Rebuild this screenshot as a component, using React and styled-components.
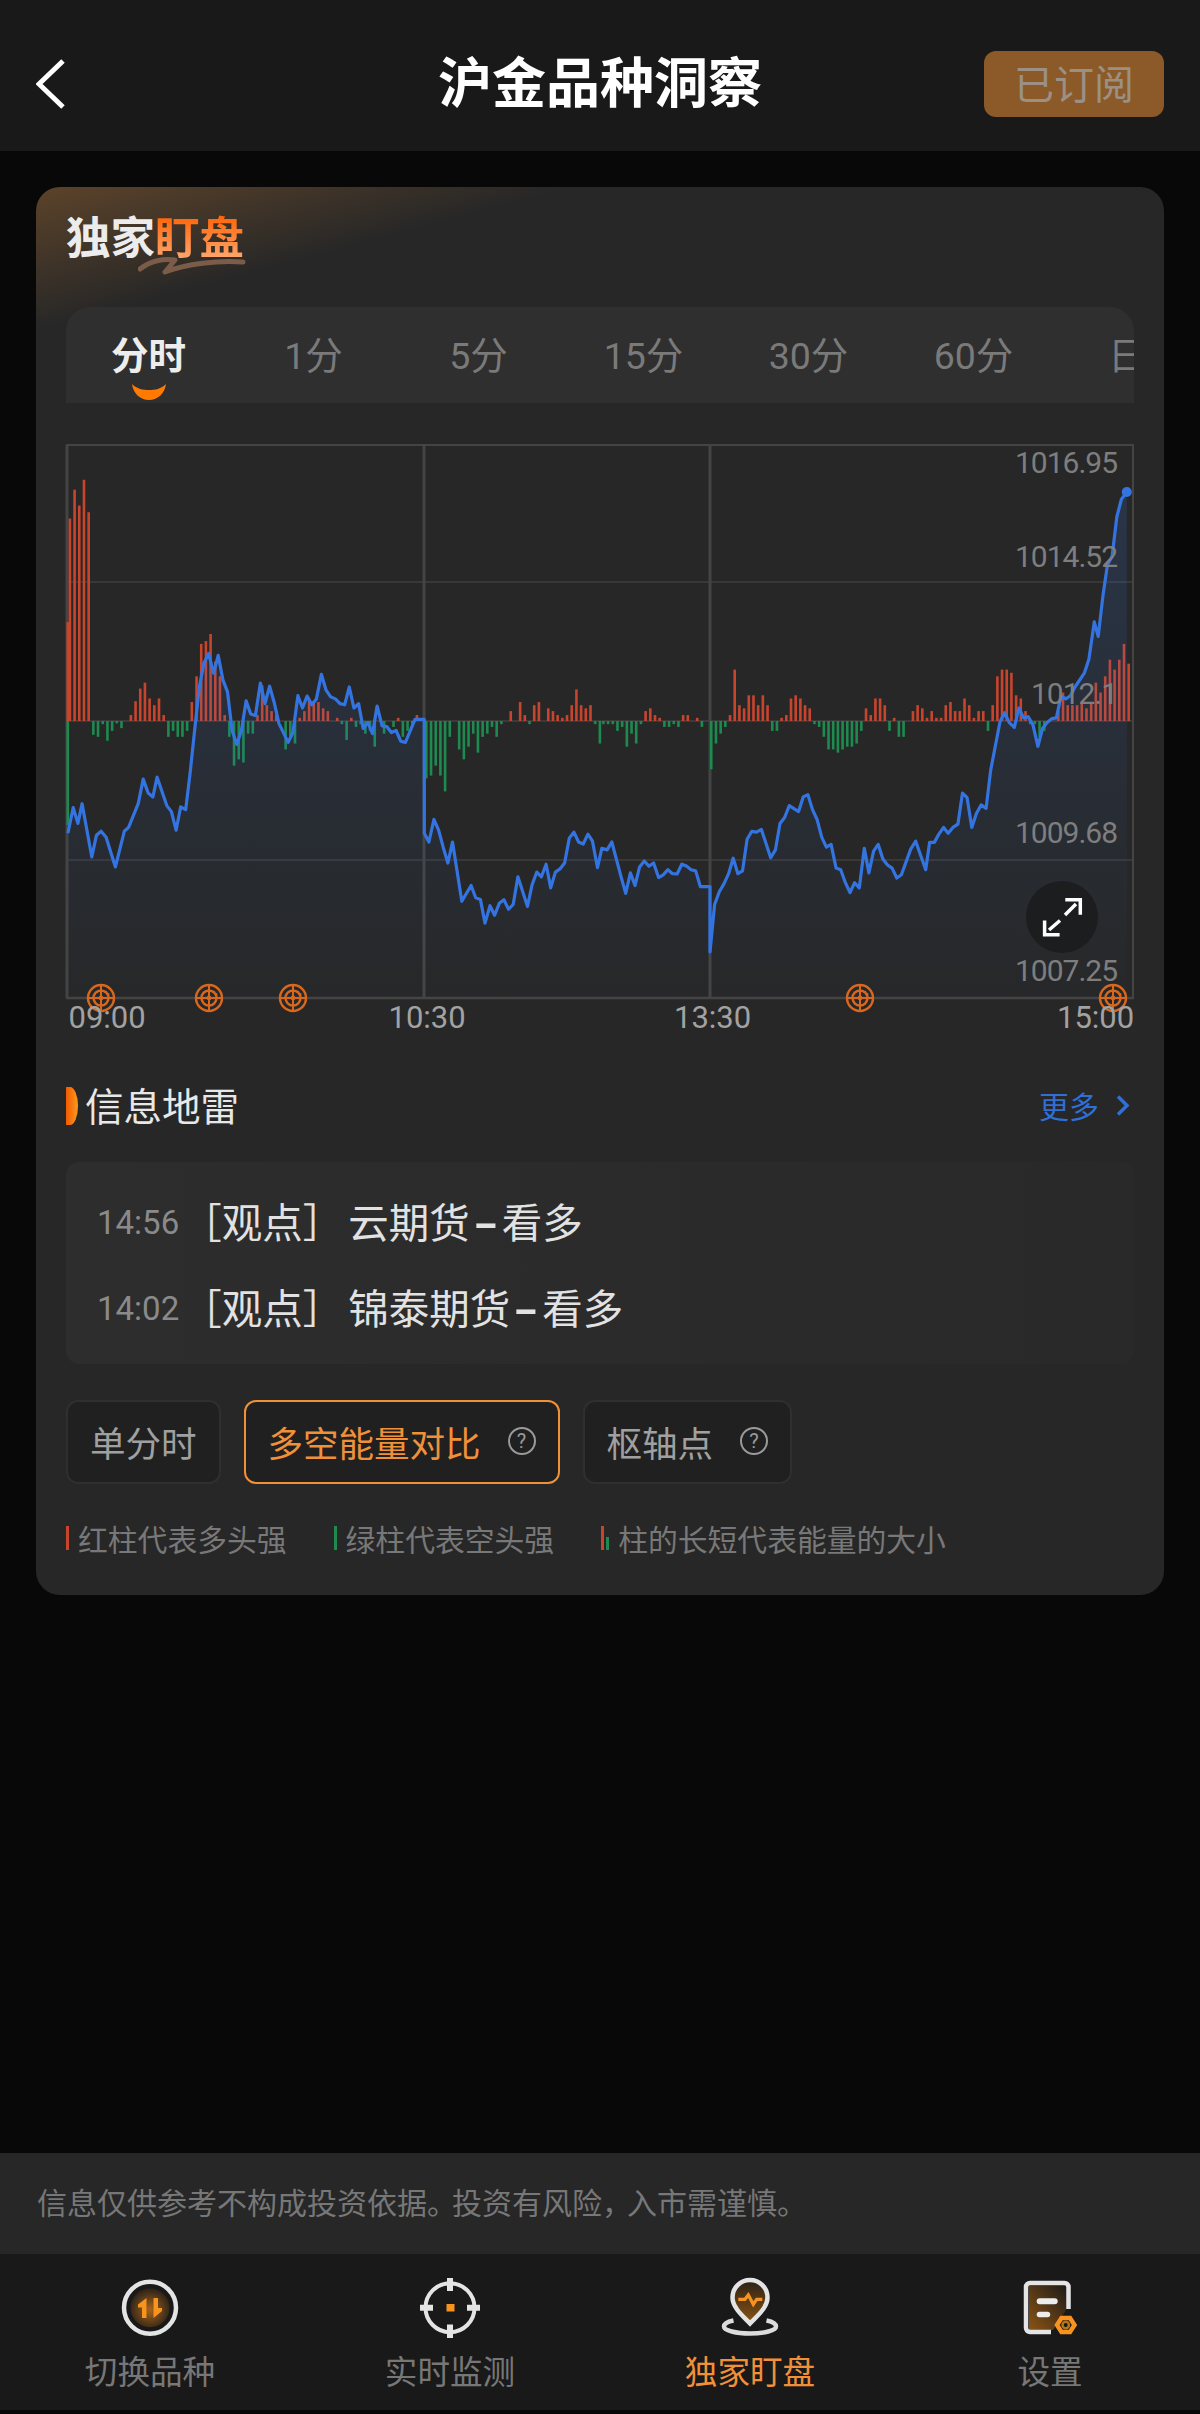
import React from "react";
import styled, { createGlobalStyle } from "styled-components";

const FONT = `Roboto, "Noto Sans CJK SC", sans-serif`;

const GlobalStyle = createGlobalStyle`
  html, body {
    margin: 0;
    padding: 0;
    background: #080808;
  }
  * {
    box-sizing: border-box;
  }
`;

const Page = styled.div`
  width: 1200px;
  height: 2414px;
  display: flex;
  flex-direction: column;
  background: #080808;
  font-family: ${FONT};
`;

const Header = styled.header`
  height: 151px;
  padding: 16px 36px 0;
  display: grid;
  grid-template-columns: 1fr auto 1fr;
  align-items: center;
  background: #191919;
`;

const BackIcon = styled.svg`
  width: 30px;
  height: 50px;
  display: block;
`;

const Title = styled.h1`
  margin: 0;
  padding-top: 3px;
  font-size: 54px;
  font-weight: 700;
  line-height: 60px;
  color: #fff;
`;

const SubscribedButton = styled.div`
  justify-self: end;
  width: 180px;
  height: 66px;
  padding-bottom: 3px;
  display: flex;
  align-items: center;
  justify-content: center;
  border-radius: 12px;
  background: #8b5a28;
  color: #9c9084;
  font-size: 40px;
`;

const Main = styled.main`
  flex: 1;
  padding: 36px 36px 0;
`;

const Card = styled.section`
  height: 1408px;
  border-radius: 24px;
  padding: 0 30px;
  background: linear-gradient(165deg, #5c432a 0, #272727 140px);
`;

const CardTitleRow = styled.div`
  height: 120px;
  padding-top: 26px;
`;

const CardTitle = styled.div`
  position: relative;
  display: inline-block;
  font-size: 44.5px;
  font-weight: 700;
  line-height: 52px;
  color: #ececec;
`;

const TitleAccent = styled.span`
  background: linear-gradient(180deg, #ff5f00, #ffb07a);
  -webkit-background-clip: text;
  background-clip: text;
  color: transparent;
`;

const Squiggle = styled.svg`
  position: absolute;
  left: 72px;
  top: 41px;
  width: 110px;
  height: 22px;
`;

const Tabs = styled.div`
  height: 96px;
  display: flex;
  overflow: hidden;
  border-radius: 24px 24px 0 0;
  background: #2f2f2f;
`;

const Tab = styled.div`
  position: relative;
  flex: none;
  width: 165px;
  padding-bottom: 5px;
  display: flex;
  align-items: center;
  justify-content: center;
  font-size: 37.5px;
  font-weight: ${(p) => (p.$active ? 700 : 400)};
  color: ${(p) => (p.$active ? "#ededed" : "#7a7a7a")};
`;

const TabSmile = styled.svg`
  position: absolute;
  left: 65px;
  bottom: 3px;
  width: 36px;
  height: 16px;
`;

const ChartBox = styled.div`
  position: relative;
  height: 595px;
  margin-top: 42px;
`;

const ChartSvg = styled.svg`
  display: block;
  width: 1068px;
  height: 595px;
  overflow: visible;
`;

const PriceLabel = styled.span`
  position: absolute;
  left: ${(p) => p.$x}px;
  top: ${(p) => p.$y}px;
  transform: translateY(-50%);
  font-size: 30px;
  letter-spacing: -1px;
  line-height: 1;
  color: #7e7e7e;
`;

const TimeLabel = styled.span`
  position: absolute;
  left: ${(p) => p.$x}px;
  top: 572px;
  transform: translateY(-50%);
  font-size: 31px;
  line-height: 1;
  color: #a2a2a2;
`;

const ExpandButton = styled.div`
  position: absolute;
  left: 960px;
  top: 436px;
  width: 72px;
  height: 72px;
  border-radius: 50%;
  background: #1c1d1f;
`;

const SectionHeader = styled.div`
  height: 40px;
  margin-top: 44px;
  margin-bottom: 38px;
  display: flex;
  align-items: center;
  justify-content: space-between;
`;

const SectionTitle = styled.div`
  display: flex;
  align-items: center;
  gap: 7px;
  font-size: 38.5px;
  color: #e8e8e8;
`;

const SectionMarker = styled.span`
  width: 12px;
  height: 38px;
  margin-top: 3px;
  border-radius: 0 8px 8px 0 / 0 19px 19px 0;
  background: linear-gradient(90deg, #f05a00, #ff9a1f);
`;

const MoreLink = styled.div`
  display: flex;
  align-items: center;
  gap: 17px;
  padding-right: 4px;
  padding-top: 2px;
  font-size: 30px;
  color: #2f6fd6;
`;

const InfoPanel = styled.div`
  height: 202px;
  padding: 33px 31px;
  display: flex;
  flex-direction: column;
  gap: 36px;
  border-radius: 14px;
  background: linear-gradient(90deg, #2d2d2d, #292929);
`;

const InfoRow = styled.div`
  height: 50px;
  display: flex;
  align-items: center;
  gap: 2px;
`;

const InfoTime = styled.span`
  padding-top: 5px;
  font-size: 33px;
  color: #8a8a8a;
`;

const InfoText = styled.span`
  font-size: 40.5px;
  color: #e2e2e2;
`;

const InfoTag = styled.span`
  margin-right: 5px;
`;

const InfoDash = styled.span`
  display: inline-block;
  width: 32px;
  text-align: center;
  font-weight: 700;
  transform: scaleX(1.7);
`;

const ModeRow = styled.div`
  margin-top: 36px;
  display: flex;
  gap: 23px;
`;

const ModeButton = styled.div`
  height: 84px;
  padding: 0 22px 2px;
  display: flex;
  align-items: center;
  gap: 27px;
  border-radius: 12px;
  border: 2px solid ${(p) => (p.$active ? "#f0913a" : "#2f2f2f")};
  background: #202020;
  font-size: 35.5px;
  color: ${(p) => (p.$active ? "#f0913a" : "#a0a0a0")};
`;

const HelpMark = styled.span`
  width: 28px;
  height: 28px;
  display: flex;
  align-items: center;
  justify-content: center;
  border-radius: 50%;
  border: 2px solid #9a9a9a;
  font-size: 20px;
  line-height: 1;
  color: #9a9a9a;
`;

const Legend = styled.div`
  height: 40px;
  margin-top: 34px;
  display: flex;
  align-items: center;
  gap: 47px;
`;

const LegendItem = styled.div`
  display: flex;
  align-items: center;
  gap: 9px;
  font-size: 29.8px;
  color: #787878;
`;

const LegendMarks = styled.span`
  height: 24px;
  display: flex;
  align-items: flex-end;
  gap: 2px;
`;

const LegendMark = styled.span`
  width: 3px;
  height: ${(p) => (p.$short ? 13 : 24)}px;
  background: ${(p) => p.$color};
`;

const Disclaimer = styled.div`
  height: 101px;
  padding: 0 37px 5px;
  display: flex;
  align-items: center;
  background: #272727;
  font-size: 30px;
  color: #777;
`;

const Punct = styled.span`
  letter-spacing: -5px;
`;

const TabBar = styled.nav`
  height: 156px;
  margin-bottom: 4px;
  padding-top: 11px;
  display: grid;
  grid-template-columns: repeat(4, 1fr);
  background: #191919;
`;

const NavItem = styled.div`
  display: flex;
  flex-direction: column;
  align-items: center;
  gap: 3px;
  font-size: 32.6px;
  line-height: 40px;
  color: ${(p) => (p.$active ? "#f0913a" : "#777")};
`;

const NavIcon = styled.svg`
  width: 100px;
  height: 85px;
  display: block;
`;

/* chart data is read off the reference: zx/zy are crop coordinates, converted below */
const LEFT_LINE = [
  [50,1020],[65,955],[78,995],[90,945],[117,1080],[130,1025],[143,1015],[157,1030],[183,1105],[208,1015],[220,1005],[247,945],[261,883],[275,918],[288,928],[300,878],[327,950],[340,965],[353,1012],[366,953],[380,960],[392,870],[405,760],[418,650],[431,590],[444,565],[458,615],[471,570],[484,632],[497,662],[510,760],[523,795],[536,760],[549,685],[562,718],[575,722],[589,640],[602,692],[615,648],[628,690],[641,742],[667,790],[680,765],[694,672],[707,703],[720,673],[733,695],[746,680],[760,618],[773,658],[786,675],[799,680],[812,692],[825,695],[838,650],[851,703],[864,692],[877,755],[890,740],[903,768],[916,698],[930,748],[943,750],[956,765],[969,760],[982,787],[995,790],[1022,732],[1048,732],[1048,1020],[1061,1042],[1075,985],[1088,1012],[1101,1055],[1114,1095],[1127,1042],[1153,1192],[1179,1152],[1192,1183],[1205,1187],[1218,1247],[1232,1203],[1245,1227],[1258,1197],[1271,1188],[1284,1212],[1297,1200],[1310,1130],[1337,1205],[1350,1150],[1363,1118],[1376,1130],[1389,1098],[1402,1158],[1415,1118],[1428,1110],[1441,1095],[1454,1032],[1467,1017],[1480,1042],[1493,1047],[1506,1022],[1519,1040],[1533,1107],
];

const RIGHT_LINE = [
  [5,1058],[20,1062],[33,1042],[59,1130],[72,1172],[85,1120],[98,1152],[111,1105],[124,1090],[137,1103],[150,1095],[164,1132],[177,1125],[190,1112],[203,1122],[216,1123],[229,1098],[242,1103],[255,1112],[268,1115],[281,1155],[308,1155],[308,1320],[321,1200],[334,1168],[347,1148],[360,1122],[373,1083],[386,1122],[399,1115],[412,1035],[425,1015],[438,1017],[452,1010],[478,1082],[491,1062],[504,995],[517,980],[530,950],[556,965],[569,928],[582,922],[595,960],[608,985],[621,1030],[634,1055],[647,1048],[661,1108],[674,1112],[687,1145],[700,1170],[713,1145],[726,1158],[740,1058],[753,1120],[766,1065],[779,1048],[792,1085],[805,1100],[818,1108],[831,1133],[844,1125],[870,1060],[884,1040],[912,1112],[923,1043],[936,1043],[949,1022],[962,1005],[975,1020],[988,1005],[1002,997],[1015,918],[1028,930],[1041,1005],[1054,970],[1067,948],[1081,957],[1094,860],[1120,738],[1133,715],[1146,740],[1160,752],[1173,703],[1186,728],[1199,725],[1212,745],[1226,800],[1239,755],[1252,740],[1265,730],[1278,728],[1291,672],[1304,680],[1317,672],[1330,650],[1356,615],[1369,580],[1384,485],[1395,522],[1408,420],[1421,340],[1434,320],[1447,220],[1460,175],[1475,157],
];

const LEFT_BARS = [
  512,585,545,610,528,-35,-40,-8,-50,-25,-6,-18,0,15,50,82,97,57,40,57,15,-40,-25,-40,-40,-25,48,113,195,202,220,150,113,15,-40,-113,-97,-105,-32,-32,15,90,40,25,15,0,-72,-40,-57,8,25,57,50,48,32,25,0,8,-8,-48,8,-15,-8,-32,-25,-65,0,-32,0,-15,8,-40,-25,-15,15,0,-145,-138,-113,-138,-178,-40,0,-72,-97,-65,-32,-80,-40,-32,-15,-40,-8,0,25,0,48,15,-8,40,48,0,32,25,15,8,15,40,80,40,32,40,-8,-57,
];

const RIGHT_BARS = [
  -8,-8,-8,-25,-15,-65,-32,-57,-8,25,32,15,8,-15,-15,-8,-15,15,15,0,8,-15,0,-122,-57,-32,-15,15,130,40,32,65,65,40,65,40,-25,-25,8,15,57,65,57,40,32,-8,-15,-40,-72,-72,-80,-72,-65,-65,-57,-25,32,15,57,57,40,-25,8,-40,-40,0,25,40,32,8,25,8,8,40,48,25,25,57,40,8,25,25,-25,40,113,130,130,122,65,57,25,-8,-8,-40,-25,0,0,25,72,40,40,40,48,32,48,97,72,113,155,130,155,195,145,
];

const SCALE_X = 2.8;
const SCALE_Y = 2.529;
const ZERO_Y = 276;
const BOTTOM_Y = 553;

const toChart = (originX) => ([zx, zy]) => [
  originX + zx / SCALE_X - 66,
  430 + zy / SCALE_Y - 445,
];

const linePoints = [...LEFT_LINE.map(toChart(50)), ...RIGHT_LINE.map(toChart(600))];
const linePath = linePoints.map(([x, y]) => `${x.toFixed(1)},${y.toFixed(1)}`).join(" ");
const lastPoint = linePoints[linePoints.length - 1];
const areaPath = `${linePath} ${lastPoint[0].toFixed(1)},${BOTTOM_Y} ${linePoints[0][0].toFixed(1)},${BOTTOM_Y}`;

const bars = [
  { x: 0.5, v: 250 },
  { x: 0.5, v: -263 },
  ...LEFT_BARS.map((v, i) => ({ x: 2.6 + i * 4.69, v })),
  ...RIGHT_BARS.map((v, i) => ({ x: 536.1 + i * 4.69, v })),
];

const RADARS = [35, 143, 227, 794, 1047];

const Radar = ({ x }) => (
  <g transform={`translate(${x} ${BOTTOM_Y})`} fill="none" stroke="#d9681f" strokeWidth="2.4">
    <circle r="13" />
    <circle r="7.5" />
    <path d="M-13 0H13M0-13V13" strokeWidth="2" />
    <circle r="2.4" fill="#d9681f" stroke="none" />
    <circle cx="5" cy="-6" r="1.2" fill="#d9681f" stroke="none" />
    <circle cx="7.5" cy="-4" r="1" fill="#d9681f" stroke="none" />
  </g>
);

const PriceChart = () => (
  <ChartSvg viewBox="0 0 1068 595">
    <defs>
      <linearGradient id="areaFill" gradientUnits="userSpaceOnUse" x1="0" y1="40" x2="0" y2={BOTTOM_Y}>
        <stop offset="0" stopColor="#3474e0" stopOpacity="0.18" />
        <stop offset="1" stopColor="#3474e0" stopOpacity="0.01" />
      </linearGradient>
    </defs>
    <path d="M0 137H1067M0 415H1067" stroke="#383838" strokeWidth="2" />
    <path d="M0 276H1067" stroke="#424242" strokeWidth="1.5" />
    <path d="M358 0V553M644 0V553" stroke="#444" strokeWidth="3" />
    <path d="M1 553V0H1067V553" fill="none" stroke="#444" strokeWidth="2" />
    <path d="M1 0V553" stroke="#444" strokeWidth="3" />
    <path d="M0 553H1068" stroke="#444" strokeWidth="2.5" />
    {bars.map((bar, i) =>
      bar.v === 0 ? null : (
        <rect
          key={i}
          x={bar.x}
          y={bar.v > 0 ? ZERO_Y - bar.v / SCALE_Y : ZERO_Y}
          width="2.6"
          height={Math.abs(bar.v) / SCALE_Y}
          fill={bar.v > 0 ? "#c8452d" : "#1d8a4f"}
        />
      )
    )}
    <polygon points={areaPath} fill="url(#areaFill)" />
    <polyline points={linePath} fill="none" stroke="#3474e0" strokeWidth="3.2" strokeLinejoin="round" />
    <circle cx={lastPoint[0]} cy={lastPoint[1]} r="5" fill="#3474e0" />
    {RADARS.map((x) => (
      <Radar key={x} x={x} />
    ))}
  </ChartSvg>
);

const SwitchIcon = () => (
  <NavIcon viewBox="0 0 100 85">
    <defs>
      <radialGradient id="switchFill" cx="0.5" cy="0.55" r="0.55">
        <stop offset="0" stopColor="#a8641a" />
        <stop offset="1" stopColor="#2a2118" />
      </radialGradient>
    </defs>
    <circle cx="50" cy="42.7" r="19.5" fill="url(#switchFill)" />
    <circle cx="50" cy="42.7" r="26" fill="none" stroke="#e4e4e4" strokeWidth="4.5" />
    <path d="M46.5 33V53H42V42.5H38V39.5Z M53.5 33H58V43H62V46L53.5 53Z" fill="#f7931e" />
  </NavIcon>
);

const MonitorIcon = () => (
  <NavIcon viewBox="0 0 100 85">
    <circle cx="50" cy="42.7" r="24.5" fill="none" stroke="#e4e4e4" strokeWidth="4" />
    <path d="M47 13H53V26H47Z M47 59.5H53V73H47Z M20 39.7H33V45.7H20Z M67 39.7H80V45.7H67Z" fill="#e4e4e4" />
    <rect x="46.5" y="39" width="8" height="7.5" fill="#f7931e" />
  </NavIcon>
);

const WatchIcon = () => (
  <NavIcon viewBox="0 0 100 85">
    <defs>
      <linearGradient id="watchFill" x1="0" y1="0" x2="0" y2="1">
        <stop offset="0" stopColor="#2a2118" />
        <stop offset="1" stopColor="#8a5414" />
      </linearGradient>
    </defs>
    <path
      d="M50 58.5C44 52 32.5 43 32.5 32.5A17.5 17.5 0 0 1 67.5 32.5C67.5 43 56 52 50 58.5Z"
      fill="url(#watchFill)"
      stroke="#e4e4e4"
      strokeWidth="4.5"
    />
    <polyline
      points="38.3,34.3 45,34.3 48.3,30 53.3,39.3 56.7,34.3 62.3,34.3"
      fill="none"
      stroke="#f7931e"
      strokeWidth="3.2"
    />
    <path
      d="M33.5 55.5C26 57 24 59 24 61.5C24 65.5 36 68.5 50 68.5C64 68.5 76 65.5 76 61.5C76 59 74 57 66.5 55.5"
      fill="none"
      stroke="#dcdcdc"
      strokeWidth="4.5"
    />
  </NavIcon>
);

const SettingsIcon = () => (
  <NavIcon viewBox="0 0 100 85">
    <defs>
      <linearGradient id="settingsFill" x1="1" y1="0" x2="0" y2="1">
        <stop offset="0" stopColor="#1f1c18" />
        <stop offset="1" stopColor="#8a5414" />
      </linearGradient>
    </defs>
    <polygon points="29,21 66,21 66,45 53,65 29,65" fill="url(#settingsFill)" />
    <path
      d="M68.5 44V22a4 4 0 0 0 -4 -4H30a4 4 0 0 0 -4 4V63a4 4 0 0 0 4 4H51"
      fill="none"
      stroke="#e4e4e4"
      strokeWidth="4.5"
    />
    <rect x="36.7" y="33.3" width="21" height="6" rx="3" fill="#ececec" />
    <rect x="36.7" y="46.7" width="13.5" height="5.6" rx="2.8" fill="#ececec" />
    <polygon points="57,60 61.5,53 70,53 74.5,60 70,67 61.5,67" fill="#191919" stroke="#f7931e" strokeWidth="4.5" />
    <circle cx="65.7" cy="60" r="3.2" fill="#191919" stroke="#b87418" strokeWidth="2.5" />
  </NavIcon>
);

const TAB_LABELS = ["分时", "1分", "5分", "15分", "30分", "60分", "日K"];

const PRICES = [
  { text: "1016.95", x: 949, y: 18 },
  { text: "1014.52", x: 949, y: 111.5 },
  { text: "1012.1", x: 965, y: 249 },
  { text: "1009.68", x: 949, y: 387.5 },
  { text: "1007.25", x: 949, y: 526 },
];

const TIMES = [
  { text: "09:00", x: 2.5 },
  { text: "10:30", x: 322.5 },
  { text: "13:30", x: 608 },
  { text: "15:00", x: 991 },
];

const NEWS = [
  { time: "14:56", source: "云期货", view: "看多" },
  { time: "14:02", source: "锦泰期货", view: "看多" },
];

const NAV_ITEMS = [
  { label: "切换品种", Icon: SwitchIcon },
  { label: "实时监测", Icon: MonitorIcon },
  { label: "独家盯盘", Icon: WatchIcon, active: true },
  { label: "设置", Icon: SettingsIcon },
];

const App = () => (
  <Page>
    <GlobalStyle />
    <Header>
      <BackIcon viewBox="0 0 30 50">
        <polyline points="27,2 3,25 27,48" fill="none" stroke="#fff" strokeWidth="5" />
      </BackIcon>
      <Title>沪金品种洞察</Title>
      <SubscribedButton>已订阅</SubscribedButton>
    </Header>
    <Main>
      <Card>
        <CardTitleRow>
          <CardTitle>
            独家<TitleAccent>盯盘</TitleAccent>
            <Squiggle viewBox="0 0 110 22">
              <path
                d="M2 15C12 7 26 4 37 6L27 18C48 10 80 6 105 8"
                fill="none"
                stroke="#7b5c49"
                strokeWidth="5"
                strokeLinecap="round"
                strokeLinejoin="round"
              />
            </Squiggle>
          </CardTitle>
        </CardTitleRow>
        <Tabs>
          {TAB_LABELS.map((label, i) => (
            <Tab key={label} $active={i === 0}>
              {label}
              {i === 0 && (
                <TabSmile viewBox="0 0 36 16">
                  <path d="M1 0C6 5 12 6 18 6C24 6 30 5 35 0C34 9 27 16 18 16C9 16 2 9 1 0Z" fill="#ff7a00" />
                </TabSmile>
              )}
            </Tab>
          ))}
        </Tabs>
        <ChartBox>
          <PriceChart />
          {PRICES.map((price) => (
            <PriceLabel key={price.text} $x={price.x} $y={price.y}>
              {price.text}
            </PriceLabel>
          ))}
          {TIMES.map((time) => (
            <TimeLabel key={time.text} $x={time.x}>
              {time.text}
            </TimeLabel>
          ))}
          <ExpandButton>
            <svg viewBox="0 0 72 72" width="72" height="72">
              <path
                d="M39.3 18.7H54.3V33.7M50 23L39 34M18.6 39.4V53.7H33.6M23 49L34 39.5"
                fill="none"
                stroke="#fff"
                strokeWidth="3.5"
              />
            </svg>
          </ExpandButton>
        </ChartBox>
        <SectionHeader>
          <SectionTitle>
            <SectionMarker />
            信息地雷
          </SectionTitle>
          <MoreLink>
            更多
            <svg viewBox="0 0 14 21" width="14" height="21">
              <polyline points="2,1.5 11,10.5 2,19.5" fill="none" stroke="#2f6fd6" strokeWidth="3.5" />
            </svg>
          </MoreLink>
        </SectionHeader>
        <InfoPanel>
          {NEWS.map((item) => (
            <InfoRow key={item.time}>
              <InfoTime>{item.time}</InfoTime>
              <InfoText>
                <InfoTag>［观点］</InfoTag>
                {item.source}
                <InfoDash>-</InfoDash>
                {item.view}
              </InfoText>
            </InfoRow>
          ))}
        </InfoPanel>
        <ModeRow>
          <ModeButton>单分时</ModeButton>
          <ModeButton $active>
            多空能量对比
            <HelpMark>?</HelpMark>
          </ModeButton>
          <ModeButton>
            枢轴点
            <HelpMark>?</HelpMark>
          </ModeButton>
        </ModeRow>
        <Legend>
          <LegendItem>
            <LegendMarks>
              <LegendMark $color="#c8452d" />
            </LegendMarks>
            红柱代表多头强
          </LegendItem>
          <LegendItem>
            <LegendMarks>
              <LegendMark $color="#1d8a4f" />
            </LegendMarks>
            绿柱代表空头强
          </LegendItem>
          <LegendItem>
            <LegendMarks>
              <LegendMark $color="#c8452d" />
              <LegendMark $color="#1d8a4f" $short />
            </LegendMarks>
            柱的长短代表能量的大小
          </LegendItem>
        </Legend>
      </Card>
    </Main>
    <Disclaimer>
      <span>
        信息仅供参考不构成投资依据<Punct>。</Punct>投资有风险<Punct>，</Punct>入市需谨慎<Punct>。</Punct>
      </span>
    </Disclaimer>
    <TabBar>
      {NAV_ITEMS.map(({ label, Icon, active }) => (
        <NavItem key={label} $active={active}>
          <Icon />
          {label}
        </NavItem>
      ))}
    </TabBar>
  </Page>
);

export default App;
